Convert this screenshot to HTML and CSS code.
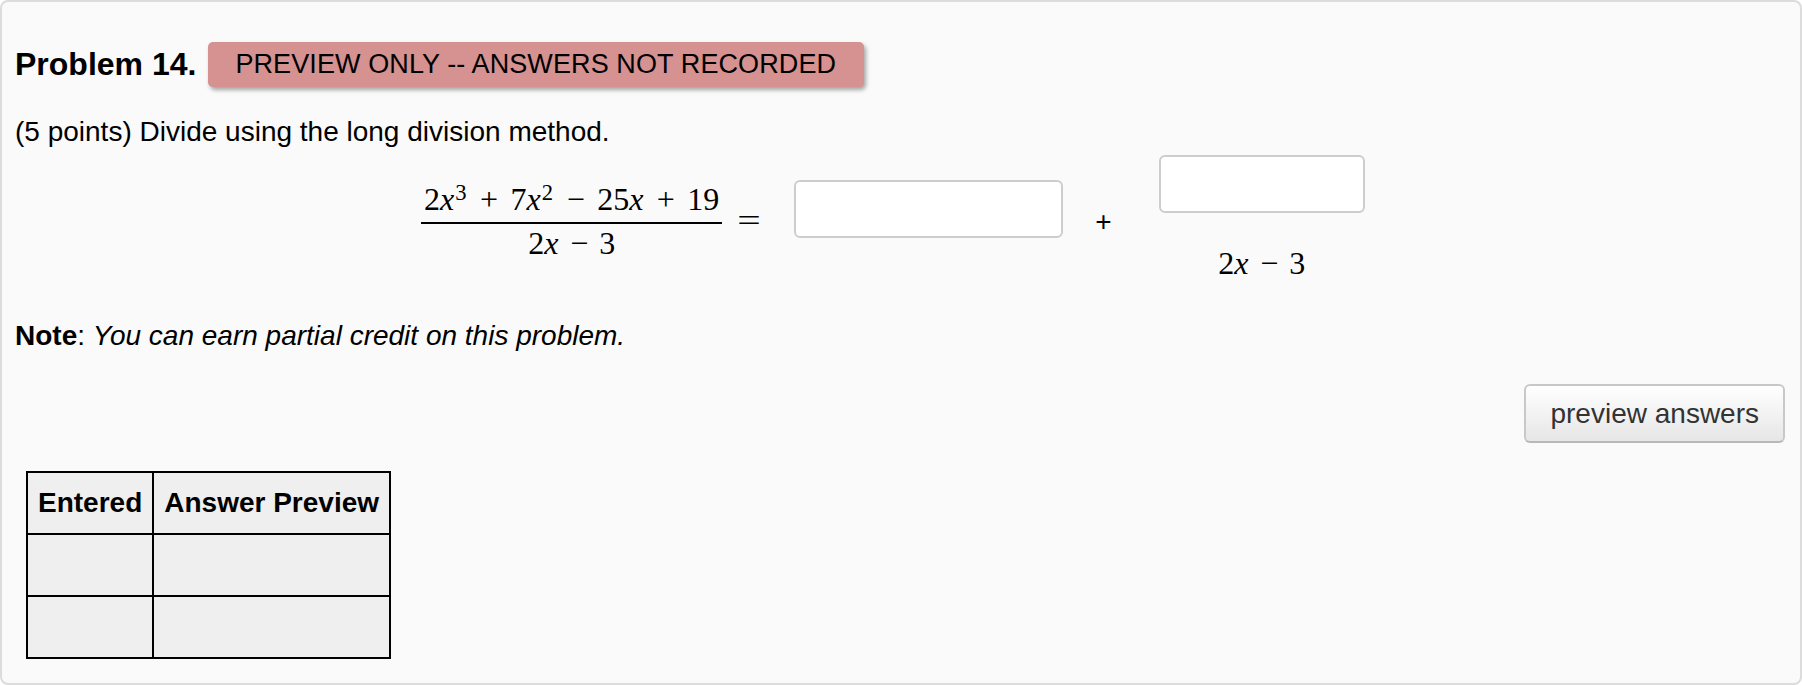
FILE: index.html
```html
<!DOCTYPE html>
<html lang="en">
<head>
<meta charset="utf-8">
<title>Problem 14</title>
<link rel="stylesheet" href="styles.css">
</head>
<body>
<div class="problem">
  <div class="header">
    <h2 class="title">Problem 14.</h2>
    <span class="badge">PREVIEW ONLY -- ANSWERS NOT RECORDED</span>
  </div>
  <p class="intro">(5 points) Divide using the long division method.</p>
  <div class="equation">
    <span class="frac"><span class="num">2<i class="mi">x</i><sup>3</sup><span class="mo">+</span>7<i class="mi">x</i><sup>2</sup><span class="mo">−</span>25<i class="mi">x</i><span class="mo">+</span>19</span><span class="den">2<i class="mi">x</i><span class="mo">−</span>3</span></span>
    <span class="eq">=</span>
    <input class="ans ans-quot" type="text" aria-label="quotient">
    <span class="plus">+</span>
    <span class="frac2"><input class="ans ans-rem" type="text" aria-label="remainder"><span class="den2">2<i class="mi">x</i><span class="mo">−</span>3</span></span>
  </div>
  <p class="note"><b>Note</b>: <i>You can earn partial credit on this problem.</i></p>
  <div class="actions"><button class="btn" type="button">preview answers</button></div>
  <table class="results">
    <tr><th>Entered</th><th>Answer Preview</th></tr>
    <tr><td></td><td></td></tr>
    <tr><td></td><td></td></tr>
  </table>
</div>
</body>
</html>
```

FILE: styles.css
```css
html, body {
  margin: 0;
  padding: 0;
}

body {
  font-family: "Liberation Sans", Arial, Helvetica, sans-serif;
  color: #000;
  background: #fff;
}

.problem {
  box-sizing: border-box;
  width: 1802px;
  height: 685px;
  border: 2px solid #dcdcdc;
  border-radius: 8px;
  background: #fafafa;
  padding: 40px 15px 0 13px;
}

.header {
  display: flex;
  align-items: center;
  height: 45px;
}

.title {
  margin: 0 12px 0 0;
  font-size: 32px;
  font-weight: bold;
  line-height: 45px;
}

.badge {
  display: block;
  height: 45px;
  line-height: 45px;
  padding: 0 28px 0 27px;
  background: #d69191;
  border-radius: 5px;
  font-size: 27px;
  letter-spacing: 0.1px;
  color: #000;
  box-shadow: 2px 3px 4px rgba(0, 0, 0, 0.35);
}

.intro {
  margin: 25px 0 0;
  font-size: 28px;
  line-height: 40px;
}

.equation {
  display: flex;
  align-items: flex-start;
  margin-top: 3px;
  padding-left: 406px;
  font-family: "Liberation Serif", "Times New Roman", serif;
  font-size: 32px;
}

.frac {
  display: flex;
  flex-direction: column;
  align-items: stretch;
  margin-top: 26px;
}

.num {
  line-height: 36px;
  padding: 0 3px 5px;
  border-bottom: 2px solid #000;
  white-space: nowrap;
  text-align: center;
}

.den {
  line-height: 36px;
  padding-top: 1px;
  text-align: center;
  white-space: nowrap;
}

.mi {
  font-style: italic;
  margin-right: 0.03em;
}

sup {
  font-size: 0.707em;
  vertical-align: 10px;
  line-height: 0;
  margin-right: 0.05em;
}

.mo {
  margin: 0 0.39em;
}

.den .mo,
.den2 .mo {
  margin: 0 0.34em;
}

.eq {
  display: inline-block;
  line-height: 36px;
  margin: 47px 36px 0 18px;
  transform: scaleX(1.3);
}

.ans {
  box-sizing: border-box;
  height: 58px;
  margin: 0;
  padding: 0 10px;
  border: 2px solid #cdcdcd;
  border-radius: 6px;
  background: #fff;
  font-size: 28px;
}

.ans-quot {
  width: 269px;
  margin-top: 25px;
}

.plus {
  font-family: "Liberation Sans", Arial, sans-serif;
  font-size: 28px;
  line-height: 36px;
  margin: 49px 47px 0 32px;
}

.frac2 {
  display: flex;
  flex-direction: column;
  align-items: center;
}

.ans-rem {
  width: 206px;
}

.den2 {
  margin-top: 32px;
  line-height: 36px;
  white-space: nowrap;
}

.note {
  margin: 35px 0 0;
  font-size: 28px;
  line-height: 40px;
}

.actions {
  display: flex;
  justify-content: flex-end;
  margin-top: 28px;
}

.btn {
  box-sizing: border-box;
  height: 59px;
  padding: 0 24px;
  font-family: "Liberation Sans", Arial, sans-serif;
  font-size: 28px;
  color: #333;
  border: 2px solid #c8c8c8;
  border-bottom-color: #b8b8b8;
  border-radius: 6px;
  background: linear-gradient(#ffffff, #e6e6e6);
}

.results {
  border-collapse: collapse;
  margin: 28px 0 0 11px;
}

.results th,
.results td {
  border: 2px solid #000;
  background: #efefef;
  height: 60px;
  padding: 0 10px;
  font-size: 28px;
}

.results th {
  font-weight: bold;
  text-align: left;
}
```
